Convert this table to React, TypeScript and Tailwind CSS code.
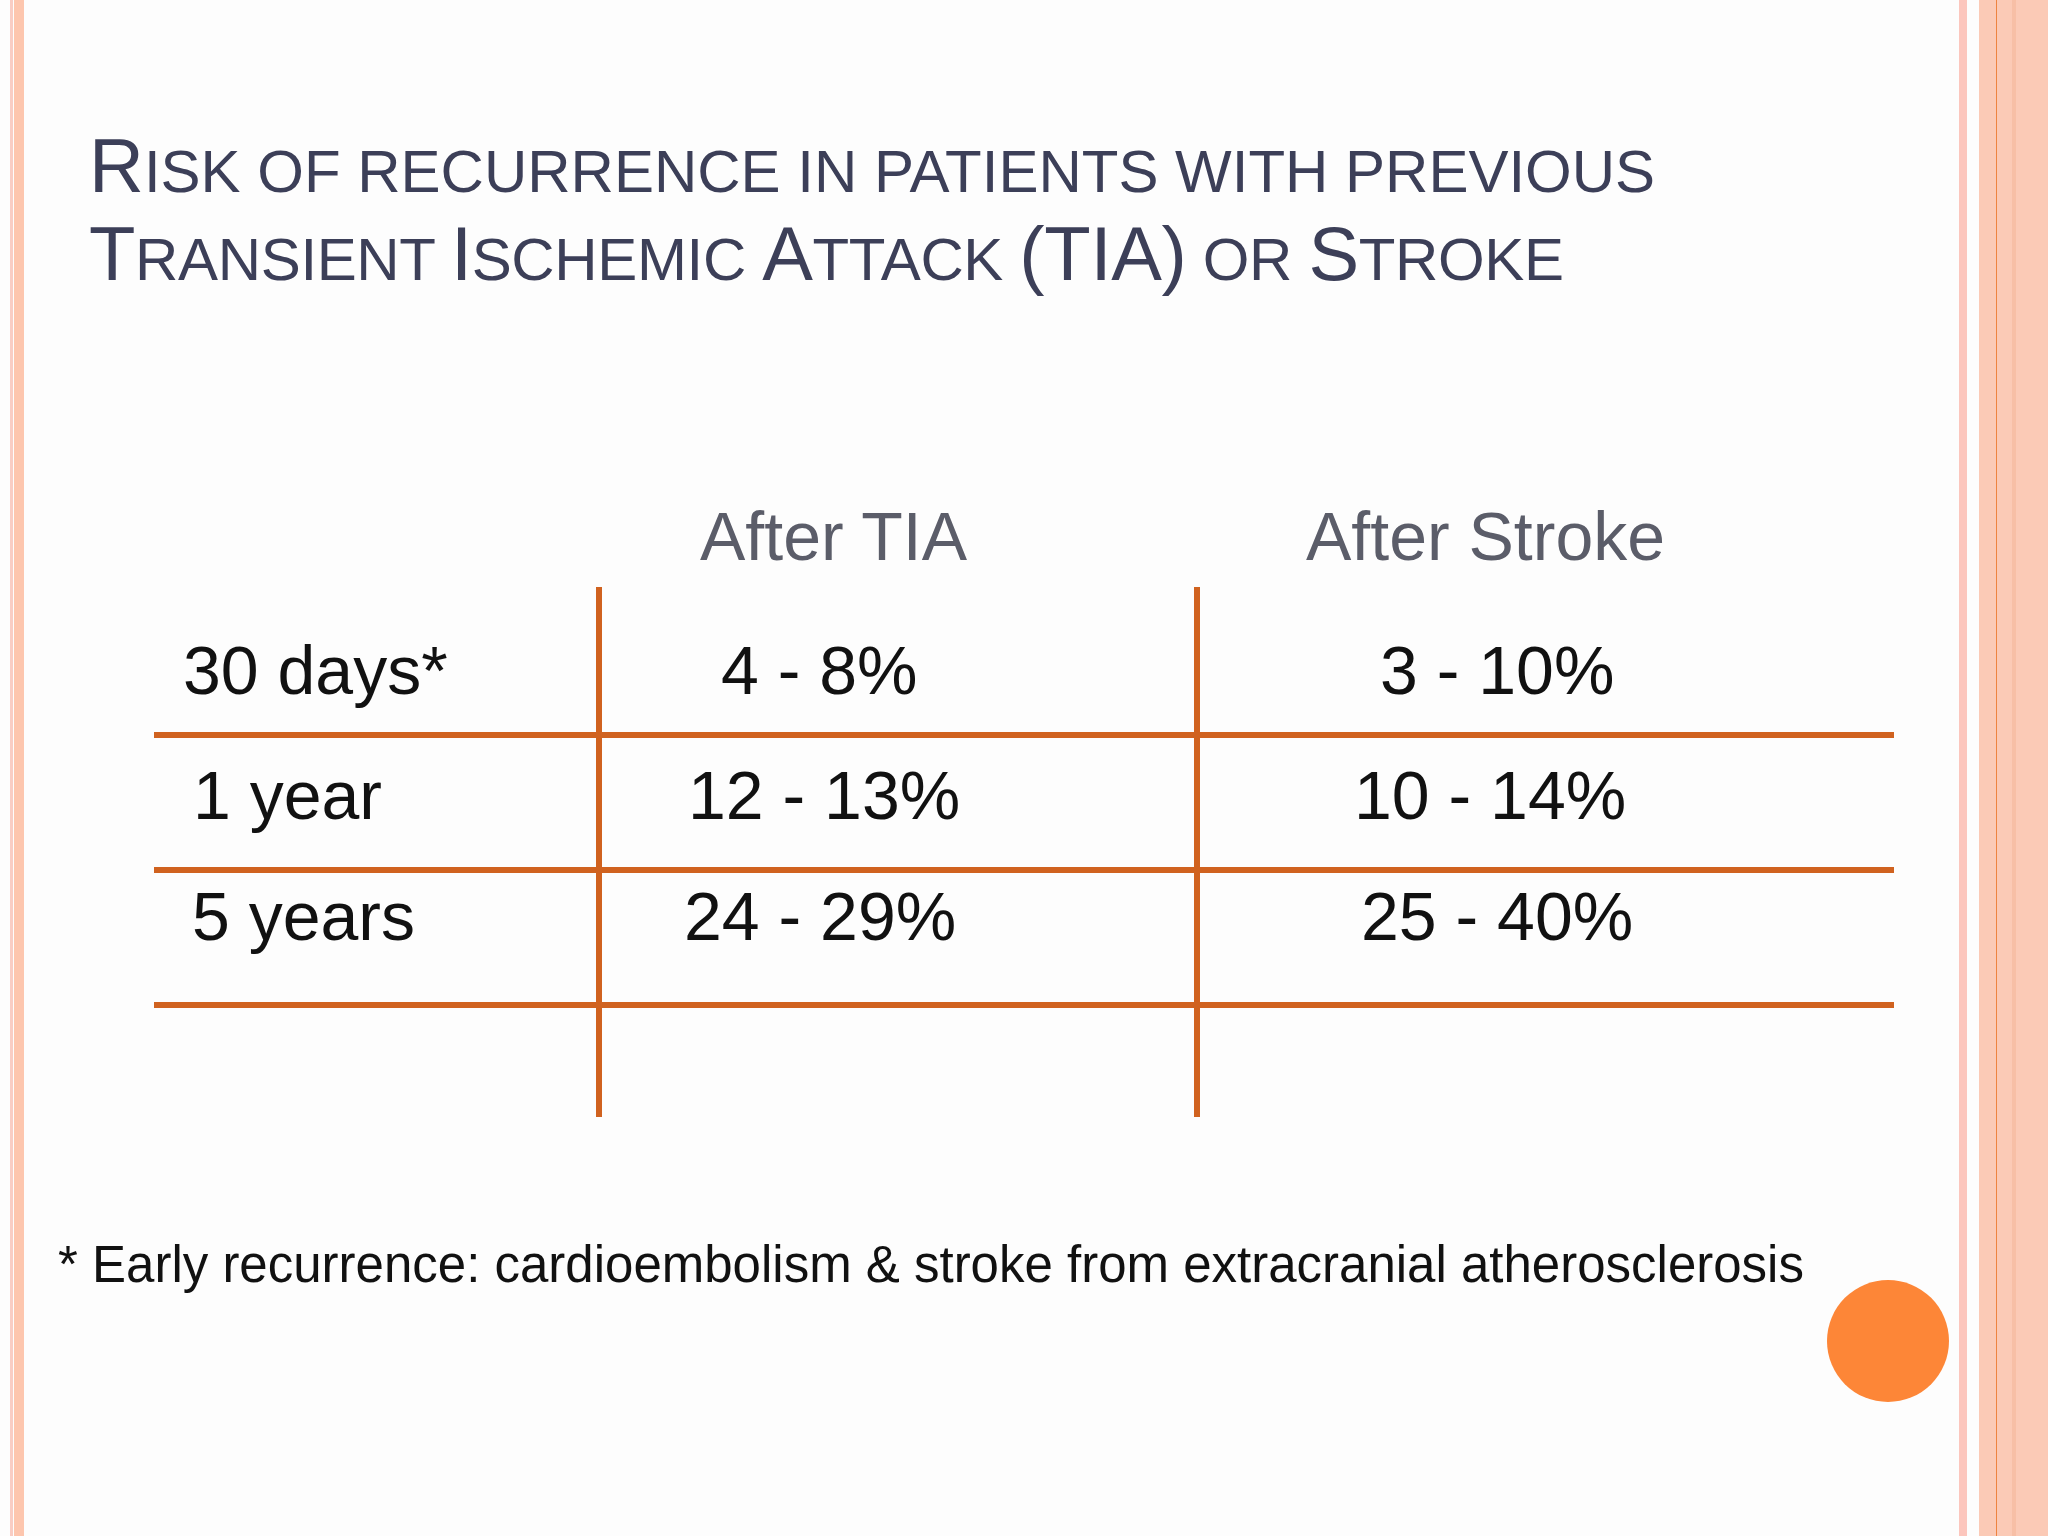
export default function App() {
  const sc = 'text-[60px] leading-none';

  return (
    <div className="flex h-[1536px] w-[2048px] bg-[#fdfdfd] font-['Liberation_Sans',Arial,sans-serif]">
      {/* left border stripes */}
      <div className="w-[10px]" />
      <div className="w-[3px] bg-[#f9cdc4]" />
      <div className="w-[1px]" />
      <div className="w-[10px] bg-[#fdc6ae]" />

      {/* slide body */}
      <div className="relative flex flex-1 flex-col">
        <h1 className="pl-[65px] pt-[122px] text-[76px] leading-[88px] font-normal text-[#3c3f58]">
          <div>
            R<span className={sc}>ISK OF RECURRENCE IN PATIENTS WITH PREVIOUS</span>
          </div>
          <div className="tracking-[-0.35px]">
            T<span className={sc}>RANSIENT </span>I<span className={sc}>SCHEMIC </span>A
            <span className={sc}>TTACK </span>(TIA)<span className={sc}> OR </span>S
            <span className={sc}>TROKE</span>
          </div>
        </h1>

        {/* table */}
        <div className="ml-[130px] mt-[204px] w-[1740px] text-[68px] leading-none">
          <div className="flex h-[85px] text-[#5b5d69]">
            <div className="w-[448px]" />
            <div className="w-[598px] pl-[98px]">After TIA</div>
            <div className="w-[694px] pl-[106px]">After Stroke</div>
          </div>

          <div className="flex h-[151px] border-b-[6px] border-[#d0621f] text-[#111]">
            <div className="w-[448px] border-r-[6px] border-[#d0621f] pl-[29px] pt-[49px]">30 days*</div>
            <div className="w-[598px] border-r-[6px] border-[#d0621f] pl-[119px] pt-[49px]">4 - 8%</div>
            <div className="w-[694px] pl-[180px] pt-[49px]">3 - 10%</div>
          </div>
          <div className="flex h-[135px] border-b-[6px] border-[#d0621f] text-[#111]">
            <div className="w-[448px] border-r-[6px] border-[#d0621f] pl-[39px] pt-[23px]">1 year</div>
            <div className="w-[598px] border-r-[6px] border-[#d0621f] pl-[86px] pt-[23px]">12 - 13%</div>
            <div className="w-[694px] pl-[154px] pt-[23px]">10 - 14%</div>
          </div>
          <div className="flex h-[135px] border-b-[6px] border-[#d0621f] text-[#111]">
            <div className="w-[448px] border-r-[6px] border-[#d0621f] pl-[38px] pt-[9px]">5 years</div>
            <div className="w-[598px] border-r-[6px] border-[#d0621f] pl-[82px] pt-[9px]">24 - 29%</div>
            <div className="w-[694px] pl-[161px] pt-[9px]">25 - 40%</div>
          </div>
          <div className="flex h-[109px]">
            <div className="w-[448px] border-r-[6px] border-[#d0621f]" />
            <div className="w-[598px] border-r-[6px] border-[#d0621f]" />
            <div className="w-[694px]" />
          </div>
        </div>

        <p className="ml-[34px] mt-[122px] text-[51px] leading-none text-[#111]">
          * Early recurrence: cardioembolism &amp; stroke from extracranial atherosclerosis
        </p>

        <div className="absolute left-[1803px] top-[1280px] h-[122px] w-[122px] rounded-full bg-[#fd8637]" />
      </div>

      {/* right border stripes */}
      <div className="w-[8px] bg-[#fcc6bd]" />
      <div className="w-[12px]" />
      <div className="w-[17px] bg-[#fbcab6]" />
      <div className="w-[1px] bg-[#ee8440]" />
      <div className="w-[15px] bg-[#fbcab6]" />
      <div className="w-[4px] bg-[#f7bfa6]" />
      <div className="w-[32px] bg-[#fbcab6]" />
    </div>
  );
}
